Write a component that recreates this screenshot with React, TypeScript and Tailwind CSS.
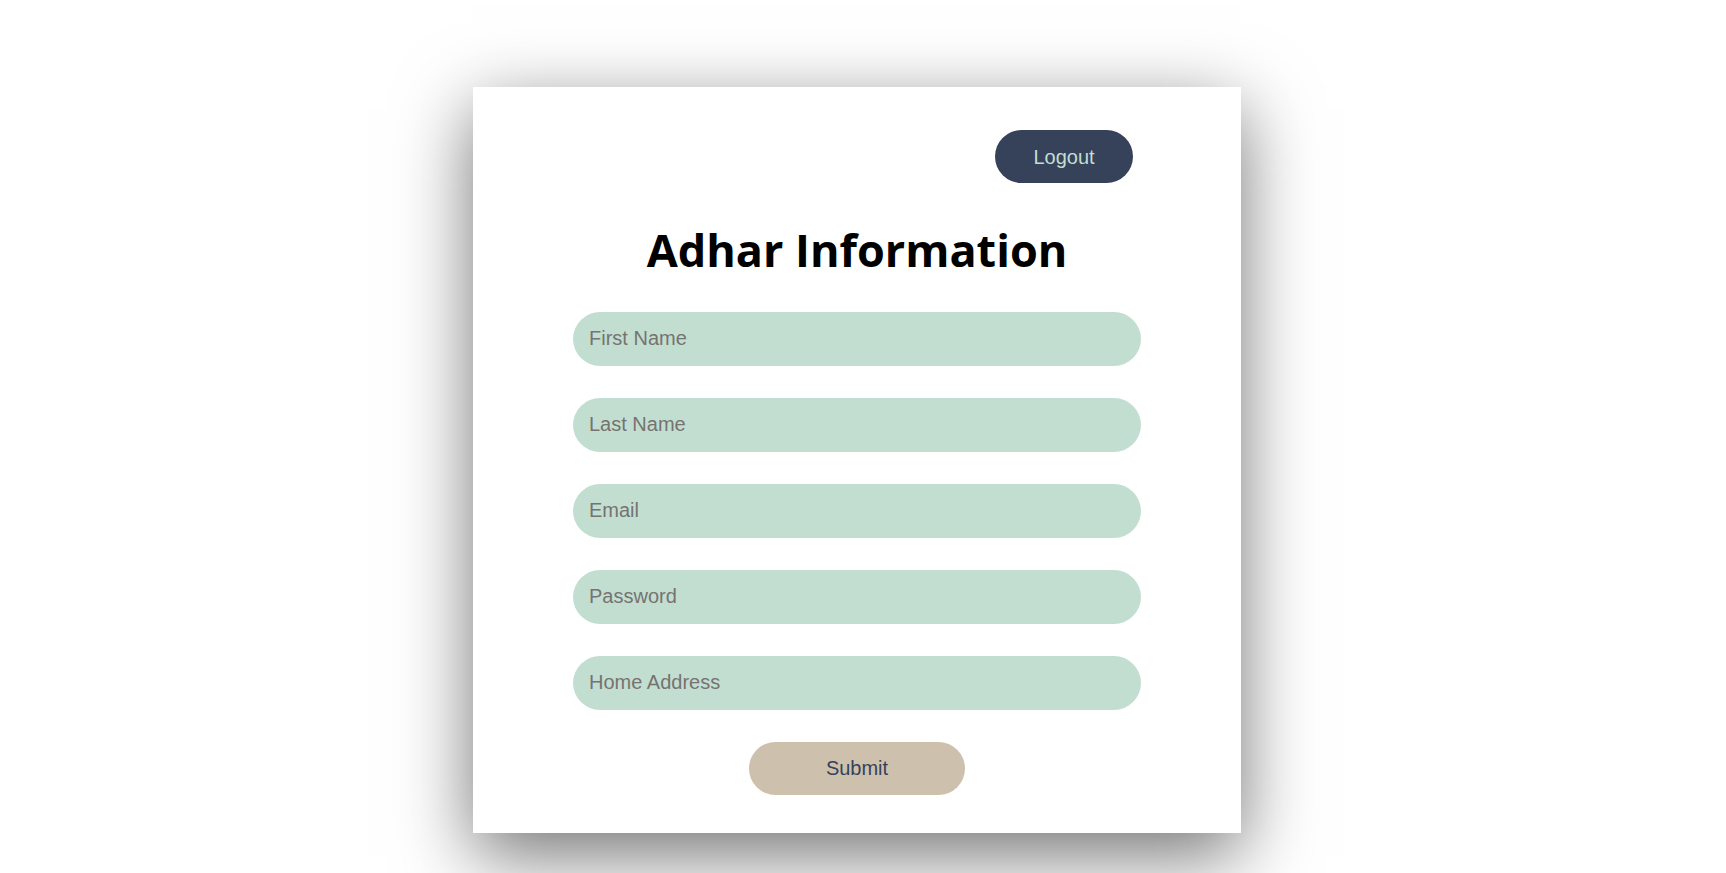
import { useState } from "react"

interface Campo {
  name: string
  placeholder: string
  type: string
}

const campos: Campo[] = [
  { name: "firstName", placeholder: "First Name", type: "text" },
  { name: "lastName", placeholder: "Last Name", type: "text" },
  { name: "email", placeholder: "Email", type: "email" },
  { name: "password", placeholder: "Password", type: "password" },
  { name: "address", placeholder: "Home Address", type: "text" },
]

export default function App () {
  const [valores, setValores] = useState<Record<string, string>>({})

  // Actualizar el valor de un campo del formulario
  const cambiar = (name: string, value: string) => {
    setValores((prev) => ({ ...prev, [name]: value }))
  }

  return (
    <div className="min-h-screen bg-white flex justify-center pr-3 pt-[87px] font-['Liberation_Sans',Arial,sans-serif]">
      <div className="w-[768px] h-[746px] bg-white shadow-[0_22px_70px_rgba(0,0,0,0.55)] flex flex-col">
        <div className="flex justify-end pt-[43px] pr-[108px]">
          <button className="w-[138px] h-[53px] rounded-full bg-[#36425a] text-[#c2ded1] text-[20px]">
            Logout
          </button>
        </div>

        <h1 className="mt-[39px] text-center text-[45px] leading-[56px] font-bold text-black font-['Open_Sans',sans-serif]">
          Adhar Information
        </h1>

        <form
          className="mt-[34px] flex flex-col items-center gap-[32px]"
          onSubmit={(e) => e.preventDefault()}
        >
          {campos.map((campo) => (
            <input
              key={campo.name}
              type={campo.type}
              placeholder={campo.placeholder}
              value={valores[campo.name] ?? ""}
              onChange={(e) => cambiar(campo.name, e.target.value)}
              className="w-[568px] h-[54px] rounded-full bg-[#c2ded1] pl-[16px] pb-[2px] text-[20px] text-[#333] placeholder:text-[#767370] outline-none"
            />
          ))}
          <button
            type="submit"
            className="w-[216px] h-[53px] rounded-full bg-[#cdc1ad] text-[#36425a] text-[20px] pb-[1px]"
          >
            Submit
          </button>
        </form>
      </div>
    </div>
  )
}
